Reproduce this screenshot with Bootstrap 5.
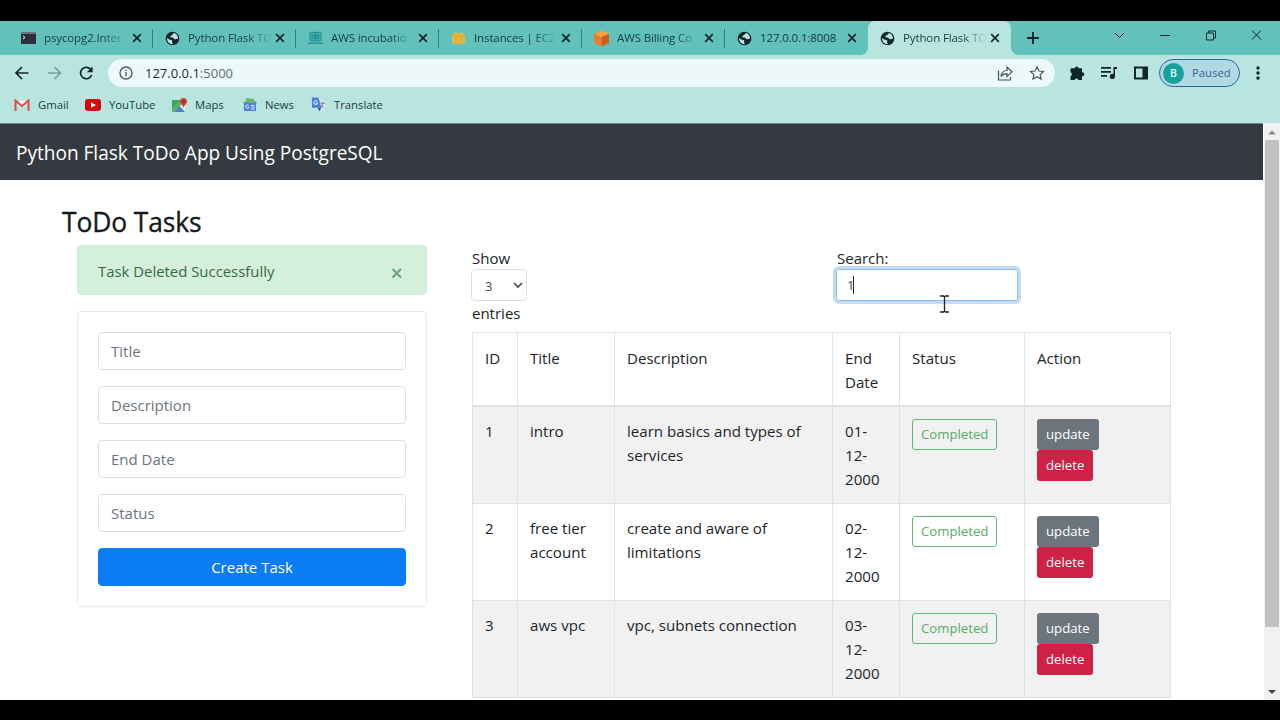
<!DOCTYPE html>
<html lang="en">
<head>
<meta charset="utf-8">
<meta name="viewport" content="width=device-width, initial-scale=1">
<title>Python Flask ToDo App</title>
<link href="https://cdn.jsdelivr.net/npm/bootstrap@5.3.0/dist/css/bootstrap.min.css" rel="stylesheet">
<style>
  body { background:#000; font-family:"Open Sans","Noto Sans",sans-serif; font-size:15px; line-height:24px; color:#212529; height:720px; overflow:hidden; padding:21px 0 20px; }
  svg { display:block; flex:none; }
  .screen { height:679px; background:#fff; overflow:hidden; }
  /* browser chrome */
  .tabstrip { height:34px; background:#63c1bc; padding-left:10px; font-size:11.5px; letter-spacing:-.12px; color:#123c42; }
  .tab-item { width:143px; height:34px; padding:0 11px 0 12px; position:relative; flex:none; }
  .tab-item:first-child { padding-left:11px; }
  .tab-item.sep::after { content:""; position:absolute; right:0; top:8px; height:19px; width:1px; background:#2f807f; }
  .tab-item.current { background:#b9e5e1; border-radius:7px 7px 0 0; }
  .tab-item.current::before, .tab-item.current::after { content:""; position:absolute; bottom:0; width:7px; height:7px; }
  .tab-item.current::before { left:-7px; background:radial-gradient(circle at 0 0,transparent 6.5px,#b9e5e1 7px); }
  .tab-item.current::after { right:-7px; background:radial-gradient(circle at 100% 0,transparent 6.5px,#b9e5e1 7px); }
  .tab-label { width:85px; margin-left:8px; white-space:nowrap; -webkit-mask-image:linear-gradient(90deg,#000 58px,transparent 84px); }
  .tab-label.full { -webkit-mask-image:none; }
  .tab-close { margin-left:auto; }
  .chrome { background:#b9e5e1; height:68px; }
  .toolbar { height:36px; padding-left:14px; }
  .omni { background:#edf9f8; border-radius:14px; height:28px; width:947px; padding:0 10px 0 11px; font-size:13px; color:#1e2b2d; }
  .omni .port { color:#5b6e70; }
  .profile { width:81px; height:28px; border:1.5px solid #31669a; border-radius:14px; background:#b0d9e4; color:#3c5f98; font-size:11.3px; padding-left:3px; }
  .avatar-dot { width:21px; height:21px; border-radius:50%; background:#16a29c; color:#e6ffff; font-size:10.5px; line-height:21px; text-align:center; font-weight:600; margin-right:8px; }
  .bookmarks { height:26px; padding:1px 0 0 14px; font-size:11.3px; color:#1d3b40; }
  .bm svg { margin-right:8px; }
  /* page */
  .page { height:577px; overflow:hidden; }
  .view { width:1264px; flex:none; }
  .top-nav { background:#343a3f; height:57px; width:1263px; padding:1px 16px 0; border-top:1px solid #6b8584; }
  .top-nav .navbar-brand { font-size:19.05px; line-height:30px; color:#fff; padding:0; margin:0; }
  .main { padding:25px 0 0 62px; }
  .main h2 { font-size:26.4px; font-weight:500; line-height:34px; margin:0 0 6px; color:#16191c; letter-spacing:-.1px; -webkit-text-stroke:.35px #16191c; }
  .left { width:350px; margin-left:15px; flex:none; }
  .left .alert { height:50px; padding:2px 20px 0; margin:0 0 16px; border-color:#d4edda; background:#d4efda; color:#356c46; border-radius:4px; font-size:14.9px; }
  .left .alert svg { margin-top:1px; }
  .form-card { height:296px; padding:20px 20px 0; border:1px solid #e8eaec; border-radius:4px; gap:16px; }
  .form-card .form-control { height:38px; flex:none; font-size:15px; padding:6px 12px; border-color:#dadfe2; border-radius:4px; color:#495057; }
  .form-card .form-control::placeholder { color:#6c757d; }
  .form-card .btn { height:38px; flex:none; font-size:15px; background:#0a7cf5; border-color:#0a7cf5; border-radius:4px; line-height:24px; }
  .right { width:700px; margin-left:44px; flex:none; }
  .filters { height:87px; }
  .filters .cap { padding:1px 0 0 1px; margin-bottom:-1px; }
  .filters .cap.low { padding-top:0; }
  .filters .col-a { width:365px; }
  .len { width:56px; height:32px; border:1px solid #dadfe2; border-radius:4px; padding:2px 3px 0 13px; font-size:13px; color:#495057; }
  .find { width:182px; height:32px; border:1px solid #8cbdec; border-radius:3px; box-shadow:0 0 0 3px #c4dcf3; padding:0 10px; font-size:13px; color:#495057; }
  .caret { width:1px; height:18px; background:#222; margin-left:-1px; }
  .ibeam { position:absolute; left:103px; top:50px; }
  .grid-tbl { width:699px; table-layout:fixed; margin:0 0 0 1px; border-collapse:collapse; color:#212529; border:1px solid #dee2e6; font-size:15.1px; }
  .grid-tbl th, .grid-tbl td { padding:13px 12px 0; border:1px solid #dee2e6; font-weight:400; vertical-align:top; }
  .grid-tbl thead th { height:73px; border-bottom:2px solid #dde2e3; padding-top:12.5px; }
  .grid-tbl tbody tr:nth-child(odd) td { background:#f1f1f2; }
  .grid-tbl tbody td { height:97px; padding-top:12px; }
  .grid-tbl tbody tr:first-child td { height:98px; }
  .grid-tbl .btn { font-size:13.2px; line-height:21px; height:31px; padding:4px 8px; border-radius:3px; display:block; width:max-content; }
  .b-done { color:#55ae63; border-color:#68b676; }
  .b-upd { background:#6c757d; color:#fff; }
  .b-del { background:#ce2145; color:#fff; }
  .sbar { width:16px; background:#f1f1f1; height:577px; padding-top:1px; flex:none; }
  .thumb { width:14px; height:487px; background:#c1c1c1; margin-top:3px; }
</style>
</head>
<body>
<svg width="0" height="0" class="position-absolute">
  <symbol id="globe" viewBox="0 0 16 16"><circle cx="8" cy="8" r="7.3" fill="#10262b"/><path d="M2.200 7.500C3.500 8 4 9 5 9.200c1 .2 2.200 0 2.700 1 .4.800-.8 1.600.1 2.300.5.500.4 1.100.2 1.500C4.500 14 2 11.300 2.200 7.500zM9.500 2.200C8.500 2.500 8.800 4 7.500 4.200c-1 .2-.9 1.500-2 1.700 0 1 1 1.200 2.300 1 1.300-.1 1.600 1.700 2.800 1.900 1.300.2 2-.8 3.200-.3C14.200 5.500 12.500 2.900 9.500 2.200z" fill="#b9e5e1"/></symbol>
  <symbol id="x" viewBox="0 0 10 10"><path d="M1.200 1.200l7.600 7.600M8.800 1.200L1.200 8.800" stroke="#10262b" stroke-width="1.700"/></symbol>
</svg>
<div class="screen">
  <div class="tabstrip d-flex">
    <div class="tab-item sep d-flex align-items-center"><svg width="15" height="12"><rect width="15" height="12" fill="#2b2f3c"/><rect width="15" height="2" fill="#68747c"/><path d="M2 4l2 1.500L2 7" fill="none" stroke="#fff"/></svg><span class="tab-label">psycopg2.Inter</span><svg class="tab-close" width="10" height="10"><use href="#x"/></svg></div>
    <div class="tab-item sep d-flex align-items-center"><svg width="15" height="15"><use href="#globe"/></svg><span class="tab-label">Python Flask TO</span><svg class="tab-close" width="10" height="10"><use href="#x"/></svg></div>
    <div class="tab-item sep d-flex align-items-center"><svg width="15" height="14" viewBox="0 0 16 14"><rect x="2" y="1" width="12" height="9" rx="1" fill="#45aaa9" stroke="#168f92"/><path d="M4 4.500h3M9 4.500h3M4 7h3M9 7h3M8 2v7M0 12.500h16" stroke="#168f92" stroke-width="1.300"/></svg><span class="tab-label">AWS incubatio</span><svg class="tab-close" width="10" height="10"><use href="#x"/></svg></div>
    <div class="tab-item sep d-flex align-items-center"><svg width="15" height="15" viewBox="0 0 16 16"><path d="M1 4l4-2.500 3 1 3-1L15 4v8l-4 2.500-3-1-3 1L1 12z" fill="#e8b83b"/><path d="M1 4.500l4 1.300 3-1 3 1 4-1.300M5 6v8M11 6v8" stroke="#d3a63a" fill="none"/></svg><span class="tab-label">Instances | EC2</span><svg class="tab-close" width="10" height="10"><use href="#x"/></svg></div>
    <div class="tab-item sep d-flex align-items-center"><svg width="15" height="17" viewBox="0.500 0 15 16"><path d="M8 0l7.500 3.200L8 6.500.5 3.200z" fill="#f6a13b"/><path d="M.5 3.200L8 6.500V16L.5 12.500z" fill="#ef7d2b"/><path d="M15.500 3.200L8 6.500V16l7.500-3.500z" fill="#d95a20"/></svg><span class="tab-label">AWS Billing Co</span><svg class="tab-close" width="10" height="10"><use href="#x"/></svg></div>
    <div class="tab-item d-flex align-items-center"><svg width="15" height="15"><use href="#globe"/></svg><span class="tab-label full">127.0.0.1:8008</span><svg class="tab-close" width="10" height="10"><use href="#x"/></svg></div>
    <div class="tab-item current d-flex align-items-center"><svg width="15" height="15"><use href="#globe"/></svg><span class="tab-label">Python Flask TO</span><svg class="tab-close" width="10" height="10"><use href="#x"/></svg></div>
    <svg width="269" height="34" fill="none" stroke="#10262b"><path d="M22 11v12M16 17h12" stroke-width="1.900"/><path d="M104 12l4.500 4.500L113 12M149 14.500h10M241 9.500l9 9M250 9.500l-9 9"/><path d="M195.500 12h7v7h-7zM197.500 12v-2h7v7h-2"/></svg>
  </div>
  <div class="chrome">
    <div class="toolbar d-flex align-items-center">
      <svg width="94" height="28" fill="none" stroke="#10262b" stroke-width="1.700"><path d="M14.500 14H2.500M8 8l-6 6 6 6"/><path d="M34 14h12M40.500 8l6 6-6 6" stroke="#75999b" stroke-width="1.500"/><path d="M77.200 11.200A5.700 5.700 0 1 0 77.600 16"/><path d="M78.600 7.500v5.800h-5.800z" fill="#10262b" stroke="none"/></svg>
      <div class="omni d-flex align-items-center">
        <svg width="14" height="14" viewBox="0 0 14 14" fill="none" stroke="#47575a" stroke-width="1.300"><circle cx="7" cy="7" r="6"/><path d="M7 6v4.200M7 3.500v1.400"/></svg>
        <span class="me-auto ps-2 ms-1">127.0.0.1<span class="port">:5000</span></span>
        <svg width="50" height="20" fill="none" stroke="#46575a" stroke-width="1.200"><path d="M3.500 7.500v9.500h12v-3"/><path d="M6 13.500c.5-4 3-6 6-6V4l5 4.800-5 4.800v-3c-3 0-4.500.7-6 2.900z"/><path d="M42 3.800l1.900 4.200 4.600.5-3.400 3.100.9 4.500-4-2.300-4 2.300.9-4.500-3.400-3.100 4.600-.5z"/></svg>
      </div>
      <svg width="104" height="28" fill="#10262b"><path d="M16.500 9.300h3.300a1.900 1.900 0 0 1 3.800 0H27v4h.300a2 2 0 0 1 0 4H27V21h-3.600a2 2 0 0 0-3.900 0h-4v-3.900a2 2 0 0 0 0-3.800v-3a1 1 0 0 1 1-1z"/><path d="M46 8h10v1.800H46zM46 12h10v1.800H46zM46 16h6v1.800h-6zM58.500 8H62v2h-2v7.500a2.600 2.600 0 1 1-1.500-2.400z"/><path d="M79 7.500h14v13H79zm2 2v9h6.500v-9z" fill-rule="evenodd"/></svg>
      <div class="profile d-flex align-items-center"><span class="avatar-dot">B</span>Paused</div>
      <svg width="36" height="20" fill="#10262b"><circle cx="18" cy="5" r="1.700"/><circle cx="18" cy="10" r="1.700"/><circle cx="18" cy="15" r="1.700"/></svg>
    </div>
    <div class="bookmarks d-flex align-items-center">
      <div class="bm d-flex align-items-center" style="width:71px"><svg width="16" height="12" viewBox="0 0 16 12"><path d="M2.500 2L8 7l5.500-5v10h1V1.500" fill="#edf5f4"/><path d="M1.500 12V1.500L8 7l6.500-5.500V12" fill="none" stroke="#d6504c" stroke-width="2"/></svg>Gmail</div>
      <div class="bm d-flex align-items-center" style="width:87px"><svg width="16" height="12"><rect width="16" height="12" rx="3" fill="#d8060c"/><path d="M6 3.300l5 2.700-5 2.700z" fill="#fff"/></svg>YouTube</div>
      <div class="bm d-flex align-items-center" style="width:71px"><svg width="15" height="14" viewBox="0 0 15 14"><path d="M0 2h9l4 5v7H0z" fill="#e6f0e7"/><path d="M0 2h9L0 13z" fill="#38a863"/><path d="M0 14V11l7-8 3 3-8 8z" fill="#57b45f"/><path d="M2 14l5.500-6L13 14z" fill="#4b83c8"/><path d="M11.500 0A3.500 3.500 0 0 1 15 3.500C15 6 12 7 11.500 10 11 7 8 6 8 3.500A3.500 3.500 0 0 1 11.500 0z" fill="#cf3f3b"/><circle cx="11.500" cy="3.500" r="1.200" fill="#8e2824"/></svg>Maps</div>
      <div class="bm d-flex align-items-center" style="width:68px"><svg width="14" height="13" viewBox="0 0 15 14"><path d="M3 0l9 1v5H3z" fill="#6ab86a"/><path d="M0 4h3l1 2H1zM12 3l3 1-1 3h-2z" fill="#6d97d2"/><path d="M1 5h13v8a1 1 0 0 1-1 1H2a1 1 0 0 1-1-1z" fill="#4a80d8"/><path d="M6 8.200a1.800 1.800 0 1 0 .4 1.600H5M8.500 8h4M8.500 10h4M8.500 12h4" fill="none" stroke="#e5f1ff"/></svg>News</div>
      <div class="bm d-flex align-items-center"><svg width="15" height="15" viewBox="0 0 16 15"><path d="M6 3h9v10H9z" fill="#dbe5ec"/><path d="M1 0h7l3 11H1z" fill="#4b7fe1"/><path d="M7 11h4l-2 4z" fill="#3655a5"/><path d="M6.700 4.300a2 2 0 1 0 .4 1.800H5.300" fill="none" stroke="#fff"/><path d="M10 6h5M12.500 5v1c0 2-1 4-2 5M11 8c1 2 2 2.500 3 3" fill="none" stroke="#667d97"/></svg>Translate</div>
    </div>
  </div>
  <div class="page d-flex">
    <div class="view">
      <nav class="top-nav navbar"><span class="navbar-brand">Python Flask ToDo App Using PostgreSQL</span></nav>
      <div class="main">
        <h2>ToDo Tasks</h2>
        <div class="d-flex align-items-start">
          <div class="left">
            <div class="alert d-flex align-items-center justify-content-between"><span>Task Deleted Successfully</span><svg width="18" height="14" fill="none" stroke="#6da37b" stroke-width="2"><path d="M4.500 4l8.500 8.500M13 4l-8.500 8.500"/></svg></div>
            <div class="form-card d-flex flex-column">
              <input class="form-control" placeholder="Title">
              <input class="form-control" placeholder="Description">
              <input class="form-control" placeholder="End Date">
              <input class="form-control" placeholder="Status">
              <button class="btn btn-primary w-100">Create Task</button>
            </div>
          </div>
          <div class="right">
            <div class="filters d-flex">
              <div class="col-a"><div class="cap">Show</div><div class="len d-flex align-items-center justify-content-between">3<svg width="10" height="8" fill="none" stroke="#43494e" stroke-width="1.700"><path d="M1 1l4 4 4-4"/></svg></div><div class="cap low">entries</div></div>
              <div class="position-relative"><div class="cap">Search:</div><div class="find d-flex align-items-center">1<span class="caret"></span></div><svg class="ibeam" width="11" height="18" fill="none" stroke="#222" stroke-width="1.300"><path d="M1 1h3.500l1 1 1-1H10M5.500 2v14M1 17h3.500l1-1 1 1H10"/></svg></div>
            </div>
            <table class="grid-tbl">
              <colgroup><col style="width:45px"><col style="width:97px"><col style="width:218px"><col style="width:67px"><col style="width:125px"><col style="width:146px"></colgroup>
              <thead><tr><th>ID</th><th>Title</th><th>Description</th><th>End Date</th><th>Status</th><th>Action</th></tr></thead>
              <tbody>
                <tr><td>1</td><td>intro</td><td>learn basics and types of services</td><td>01-<br>12-<br>2000</td><td><span class="btn b-done">Completed</span></td><td><span class="btn b-upd">update</span><span class="btn b-del">delete</span></td></tr>
                <tr><td>2</td><td>free tier account</td><td>create and aware of limitations</td><td>02-<br>12-<br>2000</td><td><span class="btn b-done">Completed</span></td><td><span class="btn b-upd">update</span><span class="btn b-del">delete</span></td></tr>
                <tr><td>3</td><td>aws vpc</td><td>vpc, subnets connection</td><td>03-<br>12-<br>2000</td><td><span class="btn b-done">Completed</span></td><td><span class="btn b-upd">update</span><span class="btn b-del">delete</span></td></tr>
              </tbody>
            </table>
          </div>
        </div>
      </div>
    </div>
    <div class="sbar d-flex flex-column">
      <svg width="16" height="13"><path d="M4 10.500l4-4 4 4z" fill="#888"/></svg>
      <div class="thumb ms-auto me-auto"></div>
      <svg class="mt-auto" width="16" height="14"><path d="M4 4l4 4 4-4z" fill="#444"/></svg>
    </div>
  </div>
</div>
<script src="https://cdn.jsdelivr.net/npm/bootstrap@5.3.0/dist/js/bootstrap.bundle.min.js"></script>
</body>
</html>
